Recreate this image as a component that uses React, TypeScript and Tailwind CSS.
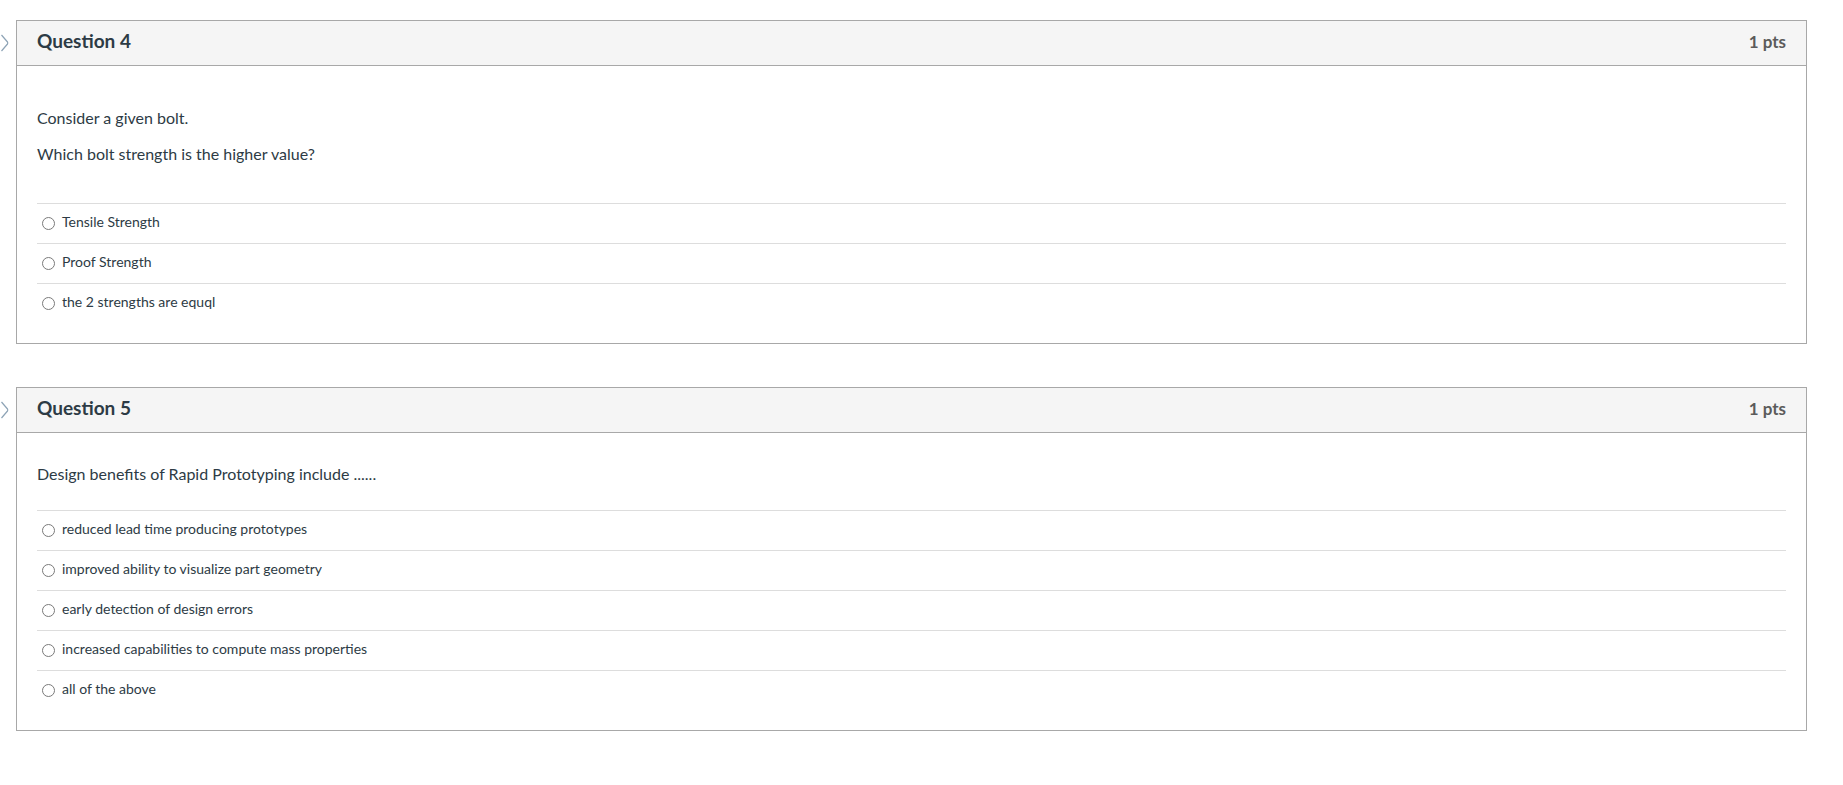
import React from "react";

const font = { fontFamily: "Lato, 'Noto Sans', sans-serif" };

function Radio() {
  return <span className="ml-[5px] inline-block h-[13px] w-[13px] shrink-0 rounded-full border border-[#7a7a7a] bg-white" />;
}

function Flag() {
  return (
    <svg className="absolute left-[-16px] top-[13px]" width="9" height="18" viewBox="0 0 9 18" fill="none">
      <path d="M0.5 1 L6.5 8 Q7 9 6.5 10 L0.5 17" stroke="#8da3b6" strokeWidth="1.2" strokeLinejoin="round" />
    </svg>
  );
}

function Answer({ text }: { text: string }) {
  return (
    <div className="flex h-[40px] items-center border-t border-[#dddddd]">
      <Radio />
      <span className="ml-[7px] pb-[4px] text-[14px] leading-none text-[#2d3b45]">{text}</span>
    </div>
  );
}

function Card({
  title,
  paragraphs,
  answers,
  pt,
  mb,
}: {
  title: string;
  paragraphs: string[];
  answers: string[];
  pt: string;
  mb: string;
}) {
  return (
    <div className="relative w-[1791px] border border-[#a8a8a8] bg-white">
      <Flag />
      <div className="flex h-[45px] items-center justify-between border-b border-[#a8a8a8] bg-[#f5f5f5] px-5">
        <span className="pb-[4px] text-[19px] font-bold text-[#2d3b45]">{title}</span>
        <span className="pb-[3px] text-[17px] font-bold text-[#5b5b5b]">1 pts</span>
      </div>
      <div className="px-5 pb-[20px]">
        <div className={`${pt} ${mb} flex flex-col gap-3`}>
          {paragraphs.map((p) => (
            <p key={p} className="text-[16px] leading-6 text-[#2d3b45]">
              {p}
            </p>
          ))}
        </div>
        {answers.map((a) => (
          <Answer key={a} text={a} />
        ))}
      </div>
    </div>
  );
}

export default function App() {
  return (
    <div className="min-h-[785px] w-[1843px] bg-white pl-4 pt-[20px]" style={font}>
      <Card
        title="Question 4"
        paragraphs={["Consider a given bolt.", "Which bolt strength is the higher value?"]}
        answers={["Tensile Strength", "Proof Strength", "the 2 strengths are equql"]}
        pt="pt-[40px]"
        mb="mb-[37px]"
      />
      <div className="h-[43px]" />
      <Card
        title="Question 5"
        paragraphs={["Design benefits of Rapid Prototyping include ......"]}
        answers={[
          "reduced lead time producing prototypes",
          "improved ability to visualize part geometry",
          "early detection of design errors",
          "increased capabilities to compute mass properties",
          "all of the above",
        ]}
        pt="pt-[29px]"
        mb="mb-[24px]"
      />
    </div>
  );
}
